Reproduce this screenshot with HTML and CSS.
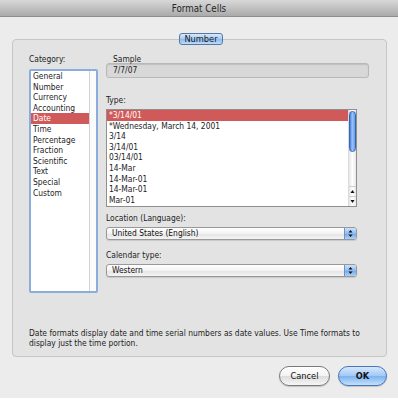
FILE: index.html
```html
<!DOCTYPE html>
<html>
<head>
  <title>Format Cells</title>
  <link rel="stylesheet" href="styles.css">
</head>
<body>
  <div class='window'>
    <div class='titlebar'>Format Cells</div>
    <div class='tabbar'><span class='tab'>Number</span></div>
    <div class='panel'>
      <div class='columns'>
        <div class='left'>
          <div class='label'>Category:</div>
          <div class='category'>
            <ul class='items'>
              <li>General</li>
              <li>Number</li>
              <li>Currency</li>
              <li>Accounting</li>
              <li class='selected'>Date</li>
              <li>Time</li>
              <li>Percentage</li>
              <li>Fraction</li>
              <li>Scientific</li>
              <li>Text</li>
              <li>Special</li>
              <li>Custom</li>
            </ul>
            <div class='track'></div>
          </div>
        </div>
        <div class='right'>
          <div class='label sample-label'>Sample</div>
          <div class='sample'>7/7/07</div>
          <div class='label type-label'>Type:</div>
          <div class='typelist'>
            <ul class='items'>
              <li class='selected'>*3/14/01</li>
              <li>*Wednesday, March 14, 2001</li>
              <li>3/14</li>
              <li>3/14/01</li>
              <li>03/14/01</li>
              <li>14-Mar</li>
              <li>14-Mar-01</li>
              <li>14-Mar-01</li>
              <li>Mar-01</li>
            </ul>
            <div class='scrollbar'>
              <div class='thumb'></div>
              <div class='arrow arrow-up'>
                <svg width='7' height='9' viewBox='0 0 7 9'><path d='M1.5 6 L3.5 3 L5.5 6 Z' fill='#111'/></svg>
              </div>
              <div class='arrow'>
                <svg width='7' height='9' viewBox='0 0 7 9'><path d='M1.5 3 L3.5 6 L5.5 3 Z' fill='#111'/></svg>
              </div>
            </div>
          </div>
          <div class='label loc-label'>Location (Language):</div>
          <div class='popup'>
            <span class='value'>United States (English)</span>
            <span class='stepper'>
              <svg width='11' height='11' viewBox='0 0 11 11'><path d='M3.5 4.5 L5.5 2 L7.5 4.5 Z M3.5 6.5 L5.5 9 L7.5 6.5 Z' fill='#111'/></svg>
            </span>
          </div>
          <div class='label cal-label'>Calendar type:</div>
          <div class='popup'>
            <span class='value'>Western</span>
            <span class='stepper'>
              <svg width='11' height='11' viewBox='0 0 11 11'><path d='M3.5 4.5 L5.5 2 L7.5 4.5 Z M3.5 6.5 L5.5 9 L7.5 6.5 Z' fill='#111'/></svg>
            </span>
          </div>
        </div>
      </div>
      <p class='desc'>Date formats display date and time serial numbers as date values. Use Time formats to display just the time portion.</p>
    </div>
    <div class='buttons'>
      <span class='button'>Cancel</span>
      <span class='button default'>OK</span>
    </div>
  </div>
</body>
</html>
```

FILE: styles.css
```css
body, html {
  margin: 0;
  padding: 0;
  background: #fff;
}
body {
  font-family: "DejaVu Sans Condensed", "DejaVu Sans", sans-serif;
  font-size: 8.4px;
  color: #1c1c1c;
}
.window {
  width: 398px;
  height: 398px;
  background: #ececec;
  overflow: hidden;
}
.titlebar {
  height: 16px;
  line-height: 17px;
  text-align: center;
  font-size: 9.7px;
  color: #262626;
  background: linear-gradient(#d8d8d8, #aaaaaa);
  border-bottom: 1px solid #8e8e8e;
}
.tabbar {
  display: flex;
  justify-content: center;
  margin-top: 16px;
  padding-left: 4px;
  height: 12px;
  position: relative;
  z-index: 1;
}
.tab {
  height: 10px;
  line-height: 10px;
  padding: 0 4px;
  font-size: 9.2px;
  color: #1a1a1a;
  border: 1px solid #5878a4;
  border-radius: 3px;
  background: linear-gradient(#d6e9fc, #a6cbf3 50%, #8ab9ee 51%, #bcdcfa);
}
.panel {
  margin: -6px 11px 0 12px;
  height: 318px;
  box-sizing: border-box;
  border: 1px solid #c6c6c6;
  border-radius: 4px;
  background: #e3e3e3;
  padding: 15px 16px 0 16px;
  display: flex;
  flex-direction: column;
}
.columns {
  display: flex;
  gap: 8px;
}
.left {
  width: 69px;
}
.right {
  flex: 1;
}
.label {
  height: 9px;
  line-height: 9px;
  white-space: nowrap;
}
.items {
  flex: 1;
  margin: 0;
  padding: 0;
  list-style: none;
  overflow: hidden;
}
.items li {
  height: 10.6px;
  line-height: 10.6px;
  padding-left: 2px;
  white-space: nowrap;
}
.items li.selected {
  background: #d05959;
  color: #fff;
}
.category {
  display: flex;
  margin-top: 5px;
  height: 224px;
  box-sizing: border-box;
  border: 2px solid #8aaddc;
  border-radius: 2px;
  background: #fff;
}
.track {
  width: 6px;
  border-left: 1px solid #d2d2d2;
  background: #fbfbfb;
}
.sample-label {
  height: 8px;
  line-height: 8px;
  padding-left: 7px;
}
.sample {
  height: 15px;
  line-height: 13px;
  margin-right: 1px;
  box-sizing: border-box;
  padding-left: 6px;
  border: 1px solid #b8b8b8;
  border-radius: 3px;
  background: #d8d8d8;
  box-shadow: inset 0 1px 1px rgba(0, 0, 0, 0.12);
}
.type-label {
  margin-top: 18px;
}
.typelist {
  display: flex;
  margin-top: 4px;
  width: 251px;
  height: 98px;
  box-sizing: border-box;
  border: 1px solid #8f8f8f;
  background: #fff;
}
.scrollbar {
  width: 7px;
  display: flex;
  flex-direction: column;
  border-left: 1px solid #dadada;
  background: linear-gradient(90deg, #e4e4e4, #fff 50%, #e8e8e8);
}
.thumb {
  margin-top: 1px;
  height: 41px;
  box-sizing: border-box;
  border: 1px solid #3464bb;
  border-radius: 4px;
  background: linear-gradient(90deg, #4a7dd6, #9cc3f5 45%, #6a9de6);
}
.arrow {
  height: 9px;
  border-top: 1px solid #cfcfcf;
  display: flex;
  justify-content: center;
}
.arrow-up {
  margin-top: auto;
}
.loc-label {
  margin-top: 7px;
}
.cal-label {
  margin-top: 11px;
}
.popup {
  display: flex;
  margin-top: 4px;
  width: 251px;
  height: 13px;
  box-sizing: border-box;
  border: 1px solid #989898;
  border-radius: 3px;
  background: linear-gradient(#fff, #f3f3f3 50%, #e4e4e4 51%, #f4f4f4);
  box-shadow: 0 1px 1px rgba(0, 0, 0, 0.12);
}
.value {
  flex: 1;
  padding-left: 5px;
  line-height: 11px;
  color: #111;
}
.stepper {
  width: 11px;
  border-left: 1px solid #7191c2;
  border-radius: 0 2px 2px 0;
  background: linear-gradient(#cde2fa, #8fbbf1 50%, #6ea6ec 51%, #aed2f7);
}
.stepper svg {
  display: block;
}
.desc {
  margin: auto 0 8px 0;
  line-height: 10px;
}
.buttons {
  display: flex;
  justify-content: flex-end;
  gap: 8px;
  margin: 9px 11px 0 0;
}
.button {
  width: 51px;
  height: 20px;
  box-sizing: border-box;
  line-height: 18px;
  text-align: center;
  font-size: 9.2px;
  color: #111;
  border: 1px solid #7a7a7a;
  border-radius: 10px;
  background: linear-gradient(#fff, #f2f2f2 50%, #dcdcdc 51%, #f6f6f6);
  box-shadow: 0 1px 1px rgba(0, 0, 0, 0.18);
}
.default {
  width: 49px;
  font-weight: bold;
  border-color: #4873bd;
  background: linear-gradient(#d6e8fc, #a0c8f4 50%, #7cb2ef 51%, #c2e1fb);
}
```
